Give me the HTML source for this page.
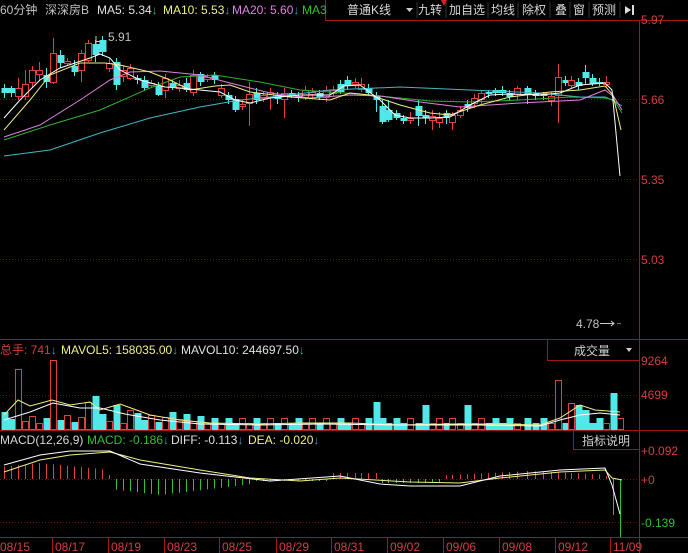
<!DOCTYPE html>
<html><head><meta charset="utf-8">
<style>
html,body{margin:0;padding:0;background:#000;width:688px;height:553px;overflow:hidden}
svg{display:block}
text{font-family:"Liberation Sans","Noto Sans CJK SC",sans-serif;font-size:12px}
</style></head><body>
<svg id="s" width="688" height="553" xmlns="http://www.w3.org/2000/svg">
<rect width="688" height="553" fill="#000"/>
<line x1="325" y1="20.5" x2="688" y2="20.5" stroke="#a01818"/>
<line x1="325.5" y1="0" x2="325.5" y2="20" stroke="#a01818"/>
<line x1="639.5" y1="20" x2="639.5" y2="553" stroke="#a01818"/>
<line x1="0" y1="339.5" x2="688" y2="339.5" stroke="#a01818"/>
<line x1="0" y1="430.5" x2="688" y2="430.5" stroke="#a01818"/>
<line x1="0" y1="537.5" x2="688" y2="537.5" stroke="#a01818"/>
<g stroke="#701010" stroke-dasharray="1,2">
<line x1="0" y1="99.5" x2="639" y2="99.5"/><line x1="0" y1="179.5" x2="639" y2="179.5"/><line x1="0" y1="259.5" x2="639" y2="259.5"/>
<line x1="0" y1="395.5" x2="639" y2="395.5"/><line x1="0" y1="479.5" x2="639" y2="479.5"/><line x1="0" y1="522.5" x2="639" y2="522.5"/>
</g>
<text x="0" y="14" fill="#c0c0c0">60分钟</text>
<text x="45" y="14" fill="#c0c0c0">深深房B</text>
<text x="97" y="14" fill="#e0e0e0">MA5: 5.34<tspan fill="#3aa0c0">↓</tspan></text>
<text x="163" y="14" fill="#f0f080">MA10: 5.53<tspan fill="#3aa0c0">↓</tspan></text>
<text x="232" y="14" fill="#e080e0">MA20: 5.60<tspan fill="#3aa0c0">↓</tspan></text>
<text x="302" y="14" fill="#30c030">MA3</text>
<g fill="#d8d8d8">
<text x="347" y="14">普通K线</text><path d="M406 8h7l-3.5 4z" fill="#ccc"/>
<text x="418" y="14">九转</text><path d="M441 0h6l-3 6z" fill="#e02020"/>
<text x="449" y="14">加自选</text><text x="491" y="14">均线</text><text x="522" y="14">除权</text>
<text x="555" y="14">叠</text><text x="573" y="14">窗</text><text x="592" y="14">预测</text>
<path d="M625 6l6 4l-6 4z M632 5h2v10h-2z" fill="#ddd"/>
</g>
<g stroke="#333"><line x1="417" y1="2" x2="417" y2="18"/><line x1="446" y1="2" x2="446" y2="18"/><line x1="488" y1="2" x2="488" y2="18"/><line x1="518" y1="2" x2="518" y2="18"/><line x1="550" y1="2" x2="550" y2="18"/><line x1="570" y1="2" x2="570" y2="18"/><line x1="589" y1="2" x2="589" y2="18"/><line x1="620" y1="2" x2="620" y2="18"/></g>
<g fill="#d04040">
<text x="641" y="24">5.97</text><text x="641" y="104">5.66</text><text x="641" y="184">5.35</text><text x="641" y="264">5.03</text>
<text x="641" y="365">9264</text><text x="641" y="399">4699</text>
<text x="641" y="455">+0.092</text><text x="641" y="484">+0</text>
</g>
<text x="641" y="527" fill="#30c030">-0.139</text>
<text x="576" y="328" fill="#c0c0c0">4.78</text><path d="M600 323.5h14" stroke="#ccc"/><path d="M611 321l3 2.5l-3 2.5" stroke="#ccc" fill="none"/><path d="M617 323.5h4" stroke="#d04040"/>
<path d="M96 36v12M96 41.5h10" stroke="#ccc"/><text x="108" y="41" fill="#c0c0c0">5.91</text>
<g id="cand"></g>
<g fill="none" stroke-width="1">
<polyline stroke="#40b8c8" points="4,156 50,150 100,133 150,118 200,107 240,100 280,96 330,90 400,87 470,90 540,93 580,97 605,97 612,100 622,106"/>
<polyline stroke="#30b030" points="4,140 50,125 100,110 150,88 180,77 215,75 260,82 300,90 344,93 380,96 430,101 470,102 520,100 570,97 605,98 614,100 622,113"/>
<polyline stroke="#e080e0" points="4,137 40,125 80,100 110,80 130,72 160,71 200,75 230,83 270,93 310,98 350,95 380,96 420,102 460,107 520,103 580,100 605,90 614,97 622,110"/>
<polyline stroke="#f0f080" points="4,130 30,100 50,75 80,63 105,63 120,65 150,72 170,80 190,90 215,86 230,85 250,92 290,97 330,100 350,93 370,95 400,105 430,113 450,115 480,105 510,97 550,92 580,90 605,86 613,95 621,130"/>
<polyline stroke="#fff" points="4,118 20,100 40,80 60,68 90,58 100,54 110,58 120,70 140,80 165,87 180,88 200,90 220,92 235,100 250,103 270,98 300,95 330,95 344,86 360,85 380,100 395,115 410,118 430,118 450,117 470,105 490,95 510,94 540,95 560,93 580,85 605,83 612,90 620,176"/>
</g>
<text x="0" y="354" fill="#d04040">总手: 741<tspan fill="#3aa0c0">↓</tspan></text>
<text x="61" y="354" fill="#f0f080">MAVOL5: 158035.00<tspan fill="#3aa0c0">↓</tspan></text>
<text x="181" y="354" fill="#e0e0e0">MAVOL10: 244697.50<tspan fill="#3aa0c0">↓</tspan></text>
<rect x="547.5" y="339.5" width="92" height="21" fill="#000" stroke="#a01818"/>
<text x="574" y="355" fill="#d0d0d0">成交量</text><path d="M626 348h6l-3 4z" fill="#ccc"/>
<g id="vol"></g>
<g fill="none"><polyline stroke="#f0f080" points="4,415 18,400 30,406 52,400 70,405 90,402 100,410 120,404 150,415 180,420 210,423 260,424 300,423 350,423 400,425 450,424 500,424 540,425 560,418 580,405 595,410 620,412"/>
<polyline stroke="#fff" points="4,420 30,412 53,403 80,408 100,408 125,414 160,420 200,424 260,425 320,424 400,425 480,425 540,426 560,420 580,415 600,413 620,415"/></g>
<text x="0" y="444" fill="#d8d8d8">MACD(12,26,9)</text>
<text x="87" y="444" fill="#30c030">MACD: -0.186<tspan fill="#3aa0c0">↓</tspan></text>
<text x="171" y="444" fill="#e0e0e0">DIFF: -0.113<tspan fill="#3aa0c0">↓</tspan></text>
<text x="248" y="444" fill="#f0f080">DEA: -0.020<tspan fill="#3aa0c0">↓</tspan></text>
<rect x="573.5" y="430.5" width="66" height="19" fill="#000" stroke="#a01818"/>
<text x="582" y="445" fill="#d0d0d0">指标说明</text>
<g id="macd"></g>
<g fill="none">
<polyline stroke="#f0f080" points="4,472 40,460 70,455 110,452 140,460 200,470 250,478 300,481 340,478 410,482 460,483 500,478 560,472 605,470 612,478 622,480"/>
<polyline stroke="#fff" points="4,465 40,455 70,451 110,451 140,464 200,473 270,481 340,476 380,484 410,486 460,486 500,476 560,470 605,468 612,485 620,514"/>
</g>
<g fill="#d04040">
<text x="0" y="551">08/15</text><text x="55" y="551">08/17</text><text x="111" y="551">08/19</text><text x="167" y="551">08/23</text><text x="222" y="551">08/25</text><text x="279" y="551">08/29</text><text x="334" y="551">08/31</text><text x="390" y="551">09/02</text><text x="446" y="551">09/06</text><text x="502" y="551">09/08</text><text x="558" y="551">09/12</text><text x="613" y="551">11/09</text>
</g>
<g stroke="#a01818"><line x1="52.5" y1="537" x2="52.5" y2="553"/><line x1="108.5" y1="537" x2="108.5" y2="553"/><line x1="164.5" y1="537" x2="164.5" y2="553"/><line x1="219.5" y1="537" x2="219.5" y2="553"/><line x1="276.5" y1="537" x2="276.5" y2="553"/><line x1="331.5" y1="537" x2="331.5" y2="553"/><line x1="387.5" y1="537" x2="387.5" y2="553"/><line x1="443.5" y1="537" x2="443.5" y2="553"/><line x1="499.5" y1="537" x2="499.5" y2="553"/><line x1="555.5" y1="537" x2="555.5" y2="553"/><line x1="610.5" y1="537" x2="610.5" y2="553"/></g>
</svg>
<script>
var NS="http://www.w3.org/2000/svg";
function el(p,t,a){var e=document.createElementNS(NS,t);for(var k in a)e.setAttribute(k,a[k]);p.appendChild(e);return e;}
var C=[[4,88,93,84,98,0],[11,88,93,86,97,0],[18,88,96,78,100,1],[25,84,96,70,100,1],[32,70,82,66,88,1],[39,70,74,62,80,1],[46,75,82,68,88,0],[53,53,82,38,84,1],[60,55,63,50,68,0],[67,61,63,58,66,1],[74,66,72,60,76,0],[81,53,70,50,82,1],[88,43,60,40,62,1],[95,44,55,40,62,0],[102,40,52,36,56,0],[109,63,68,58,72,1],[116,62,85,58,90,0],[123,70,76,66,82,1],[130,68,78,64,80,1],[137,78,80,75,84,0],[144,80,88,76,90,0],[151,83,85,80,88,1],[158,86,95,82,96,0],[165,78,90,74,98,1],[172,83,87,80,90,0],[179,85,88,80,92,1],[186,83,90,78,92,0],[193,75,92,70,96,1],[200,74,82,72,86,0],[207,77,79,74,82,1],[214,75,80,72,84,0],[221,88,95,84,98,1],[228,95,100,92,104,0],[235,99,110,96,112,0],[242,104,106,100,110,1],[249,94,103,82,126,1],[256,93,100,88,104,0],[263,95,98,92,102,1],[270,92,97,88,110,1],[277,95,99,92,104,0],[284,93,99,88,118,1],[291,93,95,90,98,0],[298,96,98,92,102,0],[305,90,97,86,100,1],[312,92,94,88,98,1],[319,93,97,90,100,0],[326,90,97,86,102,1],[333,90,93,86,96,1],[340,84,92,80,94,0],[347,80,86,76,90,0],[355,82,84,78,88,1],[361,84,89,78,92,1],[368,88,93,84,96,0],[376,96,100,92,112,0],[382,106,122,100,124,0],[388,110,120,100,122,0],[396,113,118,110,120,0],[403,118,121,115,124,0],[410,118,120,112,124,1],[418,106,116,100,126,0],[425,115,118,110,124,0],[432,116,120,110,130,1],[439,118,122,112,128,1],[446,113,118,110,124,0],[452,115,122,112,130,1],[460,110,115,106,118,1],[467,104,108,100,112,0],[474,98,103,94,108,1],[481,93,99,90,104,1],[488,92,94,90,98,0],[495,90,93,88,96,0],[502,90,93,86,96,0],[509,93,97,90,100,0],[517,88,94,86,100,1],[527,88,94,86,104,0],[535,94,96,90,100,0],[543,94,96,92,100,0],[551,96,100,92,106,1],[558,77,95,64,123,1],[565,80,83,76,86,0],[571,80,85,76,88,1],[578,82,86,78,90,0],[585,72,78,65,84,0],[592,78,84,74,86,0],[599,82,84,78,86,0],[606,82,84,76,88,1]];
var g=document.getElementById("cand");
C.forEach(function(c){var col=c[5]?"#e04040":"#50e8e8";
el(g,"line",{x1:c[0]+.5,y1:c[3],x2:c[0]+.5,y2:c[4],stroke:col});
var h=Math.max(1,c[2]-c[1]);
if(c[5])el(g,"rect",{x:c[0]-2.5,y:c[1]+.5,width:6,height:h,fill:"#000",stroke:col});
else el(g,"rect",{x:c[0]-2.5,y:c[1],width:7,height:h,fill:col});});
var gv=document.getElementById("vol");
var special={2:369,7:360,13:396,12:402,16:405,18:410,78:380,80:403,81:405,82:410};
function vbar(x,y,up){var col=up?"#e04040":"#50e8e8";
if(up)el(gv,"rect",{x:x-2.5,y:y+.5,width:6,height:429-y,fill:"#000",stroke:col});else el(gv,"rect",{x:x-2.5,y:y,width:7,height:430-y,fill:col});}
C.forEach(function(c,i){var y=special[i]||(i<30?412+((i*7)%12):(418+((i*5)%10)));if(i==66||i==60)y=405;if(i==53)y=402;vbar(c[0],y,c[5]);});
vbar(613,393,0);vbar(620,418,1);
var gm=document.getElementById("macd");
C.concat([[613],[620]]).forEach(function(c){var x=c[0];var v;
if(x<106)v=-16+Math.abs(x-40)*0.1;else if(x<115)v=-4;else if(x<255)v=16-Math.abs(x-160)*0.12;else if(x<330)v=2;else if(x<380)v=-6;else if(x<440)v=4;else if(x<600)v=-8+Math.abs(x-530)*0.05;else v=-3;
if(x==613)v=36;if(x==620)v=58;
if(Math.abs(v)<1)return;
el(gm,"line",{x1:x+.5,y1:479,x2:x+.5,y2:479+v,stroke:v<0?"#e04040":"#30c030"});});
</script>
</body></html>
